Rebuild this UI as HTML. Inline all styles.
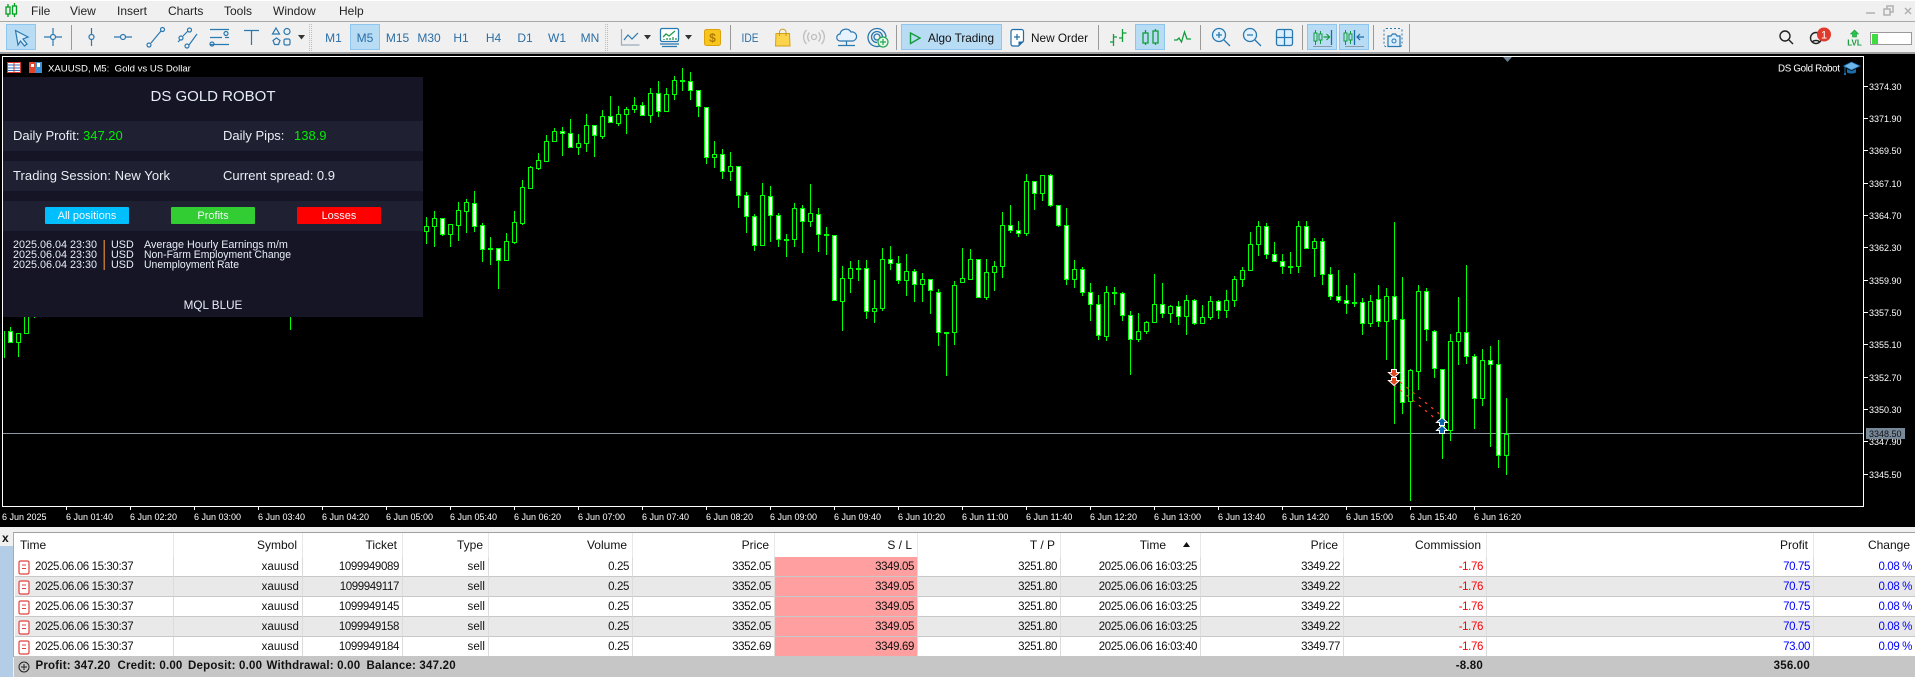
<!DOCTYPE html>
<html lang="en"><head><meta charset="utf-8"><title>XAUUSD M5</title>
<style>
html,body{margin:0;padding:0;background:#f0f0f0}
body{position:relative;width:1915px;height:677px;overflow:hidden;font-family:"Liberation Sans",sans-serif;color:#111}
svg.main{position:absolute;left:0;top:0}
svg text{font-family:"Liberation Sans",sans-serif}
.strip{position:absolute;left:0;top:546px;width:13px;height:131px;background:#b3cde6}
.closex{position:absolute;left:2px;top:531px;font:bold 12px "Liberation Sans",sans-serif;color:#111}
.wrap{position:absolute;left:13px;top:532px;width:1902px;height:125px;background:#fff;border-top:1px solid #a0a0a0;border-left:1px solid #aaa;box-sizing:border-box;overflow:hidden}
table{position:absolute;left:1px;top:0;border-collapse:separate;border-spacing:0;table-layout:fixed;width:1901px}
th,td{text-align:right;padding:0 3px 0 0;white-space:nowrap;overflow:hidden;border-right:1px solid #dcdcdc;box-sizing:border-box}
th{height:24px;font:normal 12px "Liberation Sans",sans-serif;padding-right:5px;border-right-color:#e8e8e8}
td{height:20px;font:11.5px "Liberation Sans",sans-serif;letter-spacing:-.38px;border-bottom:1px solid #c8c8c8}
tr:last-child td{border-bottom:0;height:19px}
tr.alt td{background:#e9e9e9}
td.first,th.first{text-align:left;position:relative}
th.first{padding-left:5px}
td.first{padding-left:20px}
td.first svg{position:absolute;left:3px;top:3px}
td.sym{letter-spacing:.05px}
td.sl{background:#ff9f9f!important}
td.neg{color:#f00}
td.pos{color:#00f}
.foot{position:absolute;left:14px;top:656px;width:1901px;height:21px;background:#c6c6c6}
.foot span{position:absolute;top:3px;font:bold 11.5px/15px "Liberation Sans",sans-serif;letter-spacing:.2px;white-space:nowrap;color:#111}
.foot svg{position:absolute;left:4px;top:5px}
</style></head><body>

<svg class="main" width="1915" height="677" viewBox="0 0 1915 677">
<!-- top chrome -->
<rect width="1915" height="54" fill="#f0f0f0"/>
<rect width="1915" height="1" fill="#fff"/>
<rect y="21" width="1915" height="1" fill="#a8a8a8"/>
<rect y="52" width="1915" height="2" fill="#a0a0a0"/>

<!-- logo -->
<g fill="none" stroke="#00a020" stroke-width="1.3">
<path d="M8 4v13M14.500 3v14"/><rect x="6" y="7" width="4" height="7" fill="#f0f0f0"/><rect x="12.500" y="6" width="4" height="8" fill="#f0f0f0"/>
</g>
<g font-size="12" fill="#222">
<text x="31" y="15">File</text><text x="70" y="15">View</text><text x="117" y="15">Insert</text><text x="168" y="15">Charts</text><text x="224" y="15">Tools</text><text x="273" y="15">Window</text><text x="339" y="15">Help</text>
</g>
<!-- window buttons -->
<g stroke="#b0b0b0" stroke-width="1.5" fill="none">
<path d="M1866 13h9"/><rect x="1884" y="9" width="6" height="6"/><path d="M1887 9V6h6v6h-3"/><path d="M1905 8l6 6M1911 8l-6 6"/>
</g>

<!-- selected boxes -->
<g fill="#b9dcf5" stroke="#8fc6ef">
<rect x="6.500" y="24.500" width="29" height="25"/><rect x="350.500" y="24.500" width="29" height="25"/><rect x="901.500" y="24.500" width="100" height="25"/><rect x="1135.500" y="24.500" width="29" height="25"/><rect x="1307.500" y="24.500" width="29" height="25"/><rect x="1339.500" y="24.500" width="29" height="25"/>
</g>
<!-- separators -->
<g stroke="#9a9a9a">
<path d="M71.500 25v25M730.500 25v25M896.500 25v25M1098.500 25v25M1200.500 25v25M1302.500 25v25M1373.500 25v25M1409.500 24v28"/>
</g>
<g stroke="#bbb" stroke-dasharray="1 1">
<path d="M309.500 24v27M311.500 24v27M605.500 24v27M607.500 24v27"/>
</g>

<!-- drawing tools -->
<g fill="none" stroke="#2a78b0" stroke-width="1.2">
<path d="M15.500 30.500L28 37l-5 2 4 5-2.500 2-4-5-2.500 4z" fill="#d7ecfb"/>
<path d="M44 37h6M56 37h6M53 28v6M53 40v6"/><circle cx="53" cy="37" r="2.500"/>
<path d="M91.500 28v6M91.500 40v6"/><circle cx="91.500" cy="37" r="2.500"/>
<path d="M114 37h6M126 37h6"/><circle cx="123" cy="37" r="2.500"/>
<path d="M151 43l10-12"/><circle cx="149" cy="45" r="2"/><circle cx="162.500" cy="29.500" r="2"/>
<path d="M183 36l5-5M178 42l2-2M189 45l8-11"/><circle cx="181" cy="38" r="2"/><circle cx="189.500" cy="30" r="2"/><circle cx="187" cy="46" r="2"/>
<path d="M210 29.500h19M210 37.500h12M210 44.500h19M229 37.500h0"/><circle cx="226" cy="33.500" r="2"/><circle cx="212" cy="44" r="2"/><path d="M225 37.500h4"/>
<path d="M244 30.500h15M251.500 31v14"/>
<path d="M276 28l3.500 6h-7z"/><circle cx="287" cy="31.500" r="3"/><path d="M276.500 38l3.500 2.500-1.500 4h-4l-1.500-4z"/><rect x="284" y="39" width="6" height="6" rx="1.500"/>
</g>
<path d="M298 35h7l-3.500 4.500z" fill="#333"/>

<!-- timeframes -->
<g font-size="12" fill="#2a6ea6" text-anchor="middle">
<text x="333.500" y="42">M1</text><text x="365" y="42">M5</text><text x="397.500" y="42">M15</text><text x="429" y="42">M30</text><text x="461" y="42">H1</text><text x="493.500" y="42">H4</text><text x="525" y="42">D1</text><text x="557" y="42">W1</text><text x="590" y="42">MN</text>
<text x="750" y="42" textLength="17" lengthAdjust="spacingAndGlyphs">IDE</text>
</g>

<!-- line chart icon -->
<g fill="none" stroke="#2a78b0" stroke-width="1.200">
<path d="M621.500 29v16h18" stroke="#9ab"/><path d="M624 40l4-5 4 4 6-6"/>
</g>
<path d="M644 35h7l-3.500 4.500zM685 35h7l-3.500 4.500z" fill="#333"/>
<!-- monitor -->
<g fill="none" stroke="#2a78b0" stroke-width="1.300">
<rect x="660.500" y="28.500" width="18" height="13" rx="1.500" fill="#fff"/><path d="M660 44h19M662 46.500h15"/>
<path d="M663 37l3-3 3 2 6-5" stroke="#1e9c4a"/><path d="M664 40v-1M667 40v-2M670 40v-2M673 40v-3M676 40v-2" stroke="#1e9c4a"/>
</g>
<!-- dollar -->
<rect x="704.500" y="29.500" width="16" height="16" rx="2" fill="#f8c51c" stroke="#dca20c"/>
<text x="712.500" y="42" font-size="12" font-weight="bold" fill="#b07a06" text-anchor="middle">$</text>
<!-- bag -->
<path d="M776 33.500h13.500l.5 12.500h-14.500z" fill="#fbd44c" stroke="#d4a017"/>
<path d="M779.500 36v-3.500c0-4.500 6.500-4.500 6.500 0V36" fill="none" stroke="#c99a14"/>
<!-- signal -->
<g fill="none" stroke="#bdbdbd" stroke-width="1.300">
<circle cx="814" cy="37" r="2.500"/><path d="M809.500 32.500a6.500 6.500 0 0 0 0 9M818.500 32.500a6.500 6.500 0 0 1 0 9M806.500 30a10 10 0 0 0 0 14M821.500 30a10 10 0 0 1 0 14"/>
</g>
<!-- cloud -->
<g fill="none" stroke="#2a78b0" stroke-width="1.200">
<path d="M842 41h-1.500a3.500 3.500 0 0 1-.5-7 6 6 0 0 1 11-2 4.500 4.500 0 0 1 2 9z" fill="#e6f3fd"/><path d="M846.500 41v4M838 45.500h17"/>
</g>
<!-- vps -->
<g fill="none" stroke="#2a78b0" stroke-width="1.300">
<circle cx="877" cy="37" r="3"/><path d="M880 46a9 9 0 1 1 6-9"/><path d="M877 42.500a5.500 5.500 0 1 1 5.500-5.500"/>
</g>
<circle cx="883" cy="42" r="5" fill="#e9f9ee" stroke="#1ea84e" stroke-width="1.200"/>
<path d="M880 42h6M883 39v6" stroke="#1ea84e" stroke-width="1.200"/>
<!-- algo -->
<path d="M910.500 33l9.500 5-9.500 5.500z" fill="none" stroke="#119c3a" stroke-width="1.400"/>
<text x="928" y="42" font-size="12" fill="#111" textLength="66" lengthAdjust="spacingAndGlyphs">Algo Trading</text>
<!-- new order -->
<path d="M1013 29.500h8.500a2 2 0 0 1 2 2V41l-5 5h-5.500a2 2 0 0 1-2-2V31.500a2 2 0 0 1 2-2z" fill="#fff" stroke="#1b6ca8" stroke-width="1.200"/>
<path d="M1014 37h6M1017 34v6" stroke="#1b6ca8" stroke-width="1.200"/>
<path d="M1019 46v-4h4.500" fill="#1b6ca8" stroke="#1b6ca8"/>
<text x="1031" y="42" font-size="12" fill="#111" textLength="57" lengthAdjust="spacingAndGlyphs">New Order</text>
<!-- bars -->
<g fill="none" stroke="#119c3a" stroke-width="1.300">
<path d="M1113.500 34v12M1110 42h3.500M1113.500 37h3.500M1122.500 29v13M1119 38h3.500M1122.500 33h4"/>
</g>
<!-- candles -->
<g fill="none" stroke="#119c3a" stroke-width="1.300">
<path d="M1145.500 30v15M1155.500 29v16"/><rect x="1143" y="33" width="5" height="10" fill="#b9dcf5"/><rect x="1153" y="31" width="5" height="12" fill="#b9dcf5"/>
</g>
<path d="M1174 40h3l2-2 2.500 4 3-10 2.500 7h4" fill="none" stroke="#119c3a" stroke-width="1.300"/>
<!-- zoom -->
<g fill="none" stroke="#2a78b0" stroke-width="1.300">
<circle cx="1219" cy="35" r="6.500" fill="#e3f2fd"/><path d="M1216 35h6M1219 32v6M1224 40l6 6"/>
<circle cx="1250" cy="35" r="6.500" fill="#e3f2fd"/><path d="M1247 35h6M1255 40l6 6"/>
<rect x="1276.500" y="29.500" width="16" height="16" rx="2" fill="#dcefff"/><path d="M1284.500 29v17M1276 37.500h17"/>
</g>
<!-- autoscroll -->
<g fill="none" stroke="#119c3a">
<path d="M1315.500 30v3M1315.500 41v4M1320.500 31v3M1320.500 40v4"/><rect x="1314" y="33" width="3" height="8"/><rect x="1319" y="34" width="3" height="6"/>
<path d="M1323.500 37h6M1326.500 34l3 3-3 3" stroke-width="1.200"/>
</g>
<path d="M1331.500 30v15" stroke="#1b6ca8" stroke-width="1.300"/><path d="M1313 46.500h19" stroke="#8a9aa8"/>
<g fill="none" stroke="#119c3a">
<path d="M1345.500 30v3M1345.500 41v4M1350.500 31v3M1350.500 40v4"/><rect x="1344" y="33" width="3" height="8"/><rect x="1349" y="34" width="3" height="6"/>
</g>
<path d="M1354.500 30v15" stroke="#1b6ca8" stroke-width="1.300"/><path d="M1364 37h-7M1360 34l-3 3 3 3" fill="none" stroke="#1b6ca8" stroke-width="1.200"/><path d="M1345 46.500h19" stroke="#8a9aa8"/>
<!-- screenshot -->
<rect x="1384" y="28.500" width="18" height="18" rx="2" fill="none" stroke="#2a78b0" stroke-dasharray="2 2"/>
<path d="M1388 36h3l1.500-2h3l1.500 2h3v10.500h-12z" fill="#dcefff" stroke="#2a78b0" stroke-width="1.200"/><circle cx="1394" cy="41" r="2" fill="none" stroke="#2a78b0"/>
<!-- right icons -->
<g fill="none" stroke="#222" stroke-width="1.400">
<circle cx="1785" cy="36" r="5"/><path d="M1789 40l4 4"/>
<circle cx="1816" cy="38" r="5.500"/><path d="M1812 42a6 6 0 0 1 8 0"/>
</g>
<circle cx="1824" cy="34.500" r="7" fill="#e03a2c"/>
<text x="1824" y="38.500" font-size="11" fill="#fff" text-anchor="middle">1</text>
<path d="M1854.500 30l4 4h-2v3h-4v-3h-2z" fill="#2ec04a" stroke="#119c3a" stroke-width=".6"/>
<text x="1854.500" y="45.500" font-size="8" font-weight="bold" fill="#119c3a" text-anchor="middle">LVL</text>
<rect x="1870.500" y="32.500" width="41" height="12" fill="#fff" stroke="#999"/>
<rect x="1872" y="34" width="6" height="10" fill="#3fdb3f"/>

<!-- chart -->
<rect y="54" width="1915" height="473" fill="#000"/>
<path d="M2.500 56.500H1863.500V506.500H2.500z" fill="none" stroke="#fff"/>
<path d="M1503 57h9l-4.500 5z" fill="#6b7d8e"/>
<rect x="3" y="433" width="1860" height="1" fill="#8a97a5"/>

<!-- wicks -->
<path stroke="#0f0" fill="none" d="M4.500 331V358M10.500 327V342M18.500 342V357M34.500 315V318M290.500 300V330M426.500 217V244M434.500 211V247M442.500 218V236M450.500 224V247M458.500 202V241M466.500 199V233M474.500 191V232M482.500 223V262M490.500 237V265M498.500 248V289M506.500 233V260M514.500 211V244M522.500 180V225M530.500 166V189M538.500 153V170M546.500 135V161M554.500 128V141M562.500 127V156M570.500 119V147M578.500 134V155M586.500 114V152M594.500 125V157M602.500 110V139M610.500 96V122M618.500 106V126M626.500 107V134M634.500 97V113M642.500 102V115M650.500 88V123M658.500 81V117M666.500 88V111M674.500 76V100M682.500 68V91M690.500 72V100M698.500 90V117M706.500 107V164M714.500 141V168M722.500 149V179M730.500 152V181M738.500 166V208M746.500 192V233M754.500 214V251M762.500 183V245M770.500 186V242M778.500 213V247M786.500 234V257M794.500 203V247M802.500 205V253M810.500 184V227M818.500 208V252M826.500 227V255M834.500 235V300M842.500 266V331M850.500 261V293M858.500 260V281M866.500 260V319M874.500 280V323M882.500 248V311M890.500 246V270M898.500 256V284M906.500 254V296M914.500 269V302M922.500 273V302M930.500 279V314M938.500 289V346M946.500 332V376M954.500 281V345M962.500 248V282M970.500 249V279M978.500 259V298M986.500 259V300M994.500 261V291M1002.500 212V278M1010.500 205V233M1018.500 221V237M1026.500 174V236M1034.500 181V210M1042.500 175V201M1050.500 174V207M1058.500 205V227M1066.500 208V285M1074.500 260V288M1082.500 267V296M1090.500 283V321M1098.500 295V340M1106.500 286V341M1114.500 287V305M1122.500 292V321M1130.500 311V375M1138.500 313V342M1146.500 321V334M1154.500 274V322M1162.500 283V318M1170.500 305V323M1178.500 301V325M1186.500 295V335M1194.500 299V325M1202.500 305V323M1210.500 296V320M1218.500 300V319M1226.500 290V318M1234.500 276V307M1242.500 267V287M1250.500 232V270M1258.500 221V256M1266.500 223V259M1274.500 242V261M1282.500 254V274M1290.500 252V274M1298.500 221V273M1306.500 221V248M1314.500 238V277M1322.500 238V285M1330.500 267V300M1338.500 270V303M1346.500 285V314M1354.500 273V307M1362.500 298V335M1370.500 295V327M1378.500 285V327M1386.500 288V360M1394.500 222V424M1402.500 277V414M1410.500 369V501M1418.500 285V390M1426.500 288V341M1434.500 330V378M1442.500 369V459M1450.500 334V441M1458.500 297V365M1466.500 265V364M1474.500 354V429M1482.500 349V406M1490.500 346V447M1498.500 340V468M1506.500 398V475"/>
<!-- hollow bodies -->
<path stroke="#0f0" fill="#000" d="M16.500 333.500h4v9h-4zM24.500 300.500h4v33h-4zM424.500 226.500h4v5h-4zM432.500 218.500h4v8h-4zM448.500 224.500h4v10h-4zM456.500 210.500h4v15h-4zM464.500 202.500h4v9h-4zM504.500 241.500h4v19h-4zM512.500 222.500h4v20h-4zM520.500 187.500h4v36h-4zM528.500 167.500h4v21h-4zM536.500 160.500h4v8h-4zM544.500 141.500h4v20h-4zM552.500 131.500h4v10h-4zM576.500 143.500h4v4h-4zM584.500 125.500h4v18h-4zM600.500 116.500h4v20h-4zM616.500 114.500h4v9h-4zM624.500 109.500h4v5h-4zM632.500 105.500h4v4h-4zM648.500 93.500h4v22h-4zM664.500 94.500h4v17h-4zM672.500 80.500h4v14h-4zM712.500 154.500h4v3h-4zM728.500 166.500h4v5h-4zM760.500 195.500h4v50h-4zM792.500 208.500h4v31h-4zM808.500 213.500h4v8h-4zM840.500 278.500h4v23h-4zM848.500 268.500h4v10h-4zM872.500 308.500h4v3h-4zM880.500 259.500h4v49h-4zM904.500 271.500h4v9h-4zM920.500 279.500h4v5h-4zM952.500 285.500h4v47h-4zM960.500 278.500h4v4h-4zM968.500 259.500h4v20h-4zM984.500 272.500h4v25h-4zM992.500 266.500h4v6h-4zM1000.500 225.500h4v41h-4zM1024.500 181.500h4v52h-4zM1040.500 175.500h4v18h-4zM1072.500 269.500h4v10h-4zM1104.500 292.500h4v44h-4zM1136.500 331.500h4v8h-4zM1144.500 322.500h4v9h-4zM1152.500 304.500h4v18h-4zM1168.500 306.500h4v7h-4zM1184.500 300.500h4v16h-4zM1200.500 317.500h4v6h-4zM1208.500 301.500h4v16h-4zM1224.500 300.500h4v10h-4zM1232.500 279.500h4v21h-4zM1240.500 270.500h4v9h-4zM1248.500 244.500h4v26h-4zM1256.500 226.500h4v18h-4zM1296.500 226.500h4v40h-4zM1312.500 241.500h4v7h-4zM1368.500 301.500h4v22h-4zM1384.500 296.500h4v25h-4zM1408.500 370.500h4v31h-4zM1416.500 291.500h4v80h-4zM1448.500 341.500h4v89h-4zM1456.500 332.500h4v9h-4zM1480.500 360.500h4v38h-4zM1504.500 434.500h4v21h-4z"/>
<!-- filled bodies -->
<path stroke="#0f0" fill="#fff" d="M8.500 331.500h4v11h-4zM440.500 218.500h4v16h-4zM472.500 203.500h4v23h-4zM480.500 225.500h4v24h-4zM488.500 248.500h4v1h-4zM496.500 248.500h4v12h-4zM560.500 131.500h4v2h-4zM568.500 133.500h4v14h-4zM592.500 125.500h4v10h-4zM608.500 116.500h4v6h-4zM640.500 105.500h4v10h-4zM656.500 93.500h4v18h-4zM680.500 80.500h4v1h-4zM688.500 81.500h4v9h-4zM696.500 90.500h4v16h-4zM704.500 107.500h4v50h-4zM720.500 154.500h4v17h-4zM736.500 166.500h4v29h-4zM744.500 195.500h4v21h-4zM752.500 216.500h4v29h-4zM768.500 196.500h4v19h-4zM776.500 215.500h4v24h-4zM784.500 239.500h4v1h-4zM800.500 208.500h4v13h-4zM816.500 214.500h4v20h-4zM824.500 234.500h4v1h-4zM832.500 235.500h4v65h-4zM856.500 268.500h4v1h-4zM864.500 268.500h4v43h-4zM888.500 259.500h4v4h-4zM896.500 263.500h4v17h-4zM912.500 271.500h4v13h-4zM928.500 279.500h4v11h-4zM936.500 292.500h4v40h-4zM944.500 332.500h4v1h-4zM976.500 259.500h4v38h-4zM1008.500 225.500h4v5h-4zM1016.500 230.500h4v3h-4zM1032.500 181.500h4v12h-4zM1048.500 175.500h4v30h-4zM1056.500 205.500h4v20h-4zM1064.500 225.500h4v54h-4zM1080.500 269.500h4v23h-4zM1088.500 292.500h4v12h-4zM1096.500 304.500h4v31h-4zM1112.500 292.500h4v1h-4zM1120.500 293.500h4v22h-4zM1128.500 315.500h4v24h-4zM1160.500 304.500h4v9h-4zM1176.500 306.500h4v10h-4zM1192.500 300.500h4v23h-4zM1216.500 301.500h4v9h-4zM1264.500 226.500h4v28h-4zM1272.500 254.500h4v7h-4zM1280.500 261.500h4v5h-4zM1288.500 266.500h4v1h-4zM1304.500 226.500h4v22h-4zM1320.500 241.500h4v33h-4zM1328.500 274.500h4v22h-4zM1336.500 296.500h4v4h-4zM1344.500 300.500h4v3h-4zM1352.500 302.500h4v1h-4zM1360.500 302.500h4v21h-4zM1376.500 299.500h4v22h-4zM1392.500 296.500h4v23h-4zM1400.500 319.500h4v83h-4zM1424.500 291.500h4v38h-4zM1432.500 331.500h4v37h-4zM1440.500 369.500h4v59h-4zM1464.500 332.500h4v24h-4zM1472.500 356.500h4v42h-4zM1488.500 360.500h4v4h-4zM1496.500 364.500h4v91h-4z"/>

<!-- trade lines and arrows -->
<g stroke="#ff4020" stroke-width="1.300" stroke-dasharray="2.500 5.500" fill="none">
<path d="M1394 377L1442 416M1394 385L1442 424"/>
</g>
<g stroke="#fff" stroke-width="1">
<path d="M1391.500 369.500h5v3h3l-5.500 5-5.500-5h3z" fill="#e04820"/>
<path d="M1391.500 377.500h5v3h3l-5.500 5-5.500-5h3z" fill="#e04820"/>
<path d="M1439.500 425.500h5v-3h3l-5.500-5-5.500 5h3z" fill="#0a64ad"/>
<path d="M1439.500 433.500h5v-3h3l-5.500-5-5.500 5h3z" fill="#0a64ad"/>
</g>

<!-- chart title -->
<rect x="7.500" y="62.500" width="13" height="10" fill="#fff" stroke="#d8382c"/>
<path d="M8 65h12M8 68h12M8 70.500h12" stroke="#2b6fc0"/><path d="M14 63v9" stroke="#d8382c"/>
<rect x="29" y="62" width="6" height="11" fill="#e0452e"/><rect x="35" y="62" width="7" height="11" fill="#3a8fd8"/><rect x="31" y="64" width="3" height="3" fill="#fff"/><rect x="37" y="63" width="3" height="4" fill="#fff"/>
<text x="48" y="71.500" font-size="9.600" fill="#fff" xml:space="preserve">XAUUSD, M5:  Gold vs US Dollar</text>
<text x="1778" y="71.500" font-size="9.800" fill="#fff" textLength="62">DS Gold Robot</text>
<path d="M1843.500 66l8-4 8.500 4-8.500 4z" fill="#6db6ea" stroke="#1b6ca8" stroke-width=".7"/>
<path d="M1847 69v3.500c3 1.500 6 1.500 9 0V69l-4.500 2z" fill="#1b6ca8"/><path d="M1845 67v6" stroke="#1b6ca8"/><rect x="1844" y="73" width="2" height="2" fill="#1b6ca8"/>

<!-- price axis -->
<g stroke="#fff">
<path d="M1864 86.500h4M1864 118.500h4M1864 150.500h4M1864 183.500h4M1864 215.500h4M1864 247.500h4M1864 280.500h4M1864 312.500h4M1864 344.500h4M1864 377.500h4M1864 409.500h4M1864 441.500h4M1864 474.500h4"/>
</g>
<g font-size="9" fill="#fff">
<text x="1869" y="90">3374.30</text><text x="1869" y="122">3371.90</text><text x="1869" y="154">3369.50</text><text x="1869" y="187">3367.10</text><text x="1869" y="219">3364.70</text><text x="1869" y="251">3362.30</text><text x="1869" y="284">3359.90</text><text x="1869" y="316">3357.50</text><text x="1869" y="348">3355.10</text><text x="1869" y="381">3352.70</text><text x="1869" y="413">3350.30</text><text x="1869" y="445">3347.90</text><text x="1869" y="478">3345.50</text>
</g>
<rect x="1866" y="428" width="39" height="11" fill="#778899"/>
<text x="1869" y="437" font-size="9" fill="#111">3348.50</text>

<!-- time axis -->
<g stroke="#fff">
<path d="M66.500 507v3M130.500 507v3M194.500 507v3M258.500 507v3M322.500 507v3M386.500 507v3M450.500 507v3M514.500 507v3M578.500 507v3M642.500 507v3M706.500 507v3M770.500 507v3M834.500 507v3M898.500 507v3M962.500 507v3M1026.500 507v3M1090.500 507v3M1154.500 507v3M1218.500 507v3M1282.500 507v3M1346.500 507v3M1410.500 507v3M1474.500 507v3"/>
</g>
<g font-size="9" fill="#fff">
<text x="2" y="520">6 Jun 2025</text><text x="66" y="520">6 Jun 01:40</text><text x="130" y="520">6 Jun 02:20</text><text x="194" y="520">6 Jun 03:00</text><text x="258" y="520">6 Jun 03:40</text><text x="322" y="520">6 Jun 04:20</text><text x="386" y="520">6 Jun 05:00</text><text x="450" y="520">6 Jun 05:40</text><text x="514" y="520">6 Jun 06:20</text><text x="578" y="520">6 Jun 07:00</text><text x="642" y="520">6 Jun 07:40</text><text x="706" y="520">6 Jun 08:20</text><text x="770" y="520">6 Jun 09:00</text><text x="834" y="520">6 Jun 09:40</text><text x="898" y="520">6 Jun 10:20</text><text x="962" y="520">6 Jun 11:00</text><text x="1026" y="520">6 Jun 11:40</text><text x="1090" y="520">6 Jun 12:20</text><text x="1154" y="520">6 Jun 13:00</text><text x="1218" y="520">6 Jun 13:40</text><text x="1282" y="520">6 Jun 14:20</text><text x="1346" y="520">6 Jun 15:00</text><text x="1410" y="520">6 Jun 15:40</text><text x="1474" y="520">6 Jun 16:20</text>
</g>

<!-- robot panel -->
<rect x="3" y="77" width="420" height="240" fill="#151526"/>
<rect x="3" y="121" width="420" height="30" fill="#1f2133"/>
<rect x="3" y="161" width="420" height="30" fill="#1f2133"/>
<rect x="3" y="201" width="420" height="30" fill="#1f2133"/>
<text x="213" y="101" font-size="15" fill="#e8eef5" text-anchor="middle">DS GOLD ROBOT</text>
<g font-size="13" fill="#e8eef5">
<text x="13" y="140">Daily Profit:</text><text x="83" y="140" fill="#0e0">347.20</text>
<text x="223" y="140">Daily Pips:</text><text x="294" y="140" fill="#0e0">138.9</text>
<text x="13" y="180" textLength="157">Trading Session: New York</text>
<text x="223" y="180">Current spread: 0.9</text>
</g>
<rect x="45" y="207" width="84" height="17" rx="1" fill="#00bfff"/>
<rect x="171" y="207" width="84" height="17" rx="1" fill="#32cd32"/>
<rect x="297" y="207" width="84" height="17" rx="1" fill="#f00"/>
<g font-size="11" fill="#f4f8fb" text-anchor="middle">
<text x="87" y="219">All positions</text><text x="213" y="219">Profits</text><text x="339" y="219">Losses</text>
</g>
<rect x="103.500" y="240" width="1.500" height="30" fill="#b87333"/>
<g font-size="10.800" fill="#e8eef5">
<text x="13" y="248">2025.06.04 23:30</text><text x="111" y="248">USD</text><text x="144" y="248">Average Hourly Earnings m/m</text>
<text x="13" y="258">2025.06.04 23:30</text><text x="111" y="258">USD</text><text x="144" y="258" textLength="147" lengthAdjust="spacingAndGlyphs">Non-Farm Employment Change</text>
<text x="13" y="268">2025.06.04 23:30</text><text x="111" y="268">USD</text><text x="144" y="268" textLength="95" lengthAdjust="spacingAndGlyphs">Unemployment Rate</text>
</g>
<text x="213" y="309" font-size="11.700" fill="#e8eef5" text-anchor="middle">MQL BLUE</text>
</svg>

<!-- bottom panel -->
<div class="strip"></div>
<div class="closex">x</div>
<div class="wrap">
<table>
<colgroup><col style="width:159px"><col style="width:129px"><col style="width:100px"><col style="width:86px"><col style="width:144px"><col style="width:142px"><col style="width:143px"><col style="width:143px"><col style="width:140px"><col style="width:143px"><col style="width:143px"><col style="width:327px"><col style="width:102px"></colgroup>
<tr><th class="first">Time</th><th>Symbol</th><th>Ticket</th><th>Type</th><th>Volume</th><th>Price</th><th>S / L</th><th>T / P</th><th style="padding-right:34px;position:relative">Time<svg width="7" height="5" style="position:absolute;right:10px;top:9px"><path d="M0 5L3.500 0 7 5z" fill="#111"/></svg></th><th>Price</th><th>Commission</th><th>Profit</th><th>Change</th></tr>
<tr><td class="first"><svg width="12" height="15"><rect x="1" y="1" width="10" height="13" rx="1.500" fill="#fff" stroke="#e04040" stroke-width="1.200"/><path d="M4 5h4M4 8.500h4" stroke="#e04040"/></svg>2025.06.06 15:30:37</td><td class="sym">xauusd</td><td>1099949089</td><td class="sym">sell</td><td>0.25</td><td>3352.05</td><td class="sl">3349.05</td><td>3251.80</td><td>2025.06.06 16:03:25</td><td>3349.22</td><td class="neg">-1.76</td><td class="pos">70.75</td><td class="pos">0.08 %</td></tr>
<tr class="alt"><td class="first"><svg width="12" height="15"><rect x="1" y="1" width="10" height="13" rx="1.500" fill="#fff" stroke="#e04040" stroke-width="1.200"/><path d="M4 5h4M4 8.500h4" stroke="#e04040"/></svg>2025.06.06 15:30:37</td><td class="sym">xauusd</td><td>1099949117</td><td class="sym">sell</td><td>0.25</td><td>3352.05</td><td class="sl">3349.05</td><td>3251.80</td><td>2025.06.06 16:03:25</td><td>3349.22</td><td class="neg">-1.76</td><td class="pos">70.75</td><td class="pos">0.08 %</td></tr>
<tr><td class="first"><svg width="12" height="15"><rect x="1" y="1" width="10" height="13" rx="1.500" fill="#fff" stroke="#e04040" stroke-width="1.200"/><path d="M4 5h4M4 8.500h4" stroke="#e04040"/></svg>2025.06.06 15:30:37</td><td class="sym">xauusd</td><td>1099949145</td><td class="sym">sell</td><td>0.25</td><td>3352.05</td><td class="sl">3349.05</td><td>3251.80</td><td>2025.06.06 16:03:25</td><td>3349.22</td><td class="neg">-1.76</td><td class="pos">70.75</td><td class="pos">0.08 %</td></tr>
<tr class="alt"><td class="first"><svg width="12" height="15"><rect x="1" y="1" width="10" height="13" rx="1.500" fill="#fff" stroke="#e04040" stroke-width="1.200"/><path d="M4 5h4M4 8.500h4" stroke="#e04040"/></svg>2025.06.06 15:30:37</td><td class="sym">xauusd</td><td>1099949158</td><td class="sym">sell</td><td>0.25</td><td>3352.05</td><td class="sl">3349.05</td><td>3251.80</td><td>2025.06.06 16:03:25</td><td>3349.22</td><td class="neg">-1.76</td><td class="pos">70.75</td><td class="pos">0.08 %</td></tr>
<tr><td class="first"><svg width="12" height="15"><rect x="1" y="1" width="10" height="13" rx="1.500" fill="#fff" stroke="#e04040" stroke-width="1.200"/><path d="M4 5h4M4 8.500h4" stroke="#e04040"/></svg>2025.06.06 15:30:37</td><td class="sym">xauusd</td><td>1099949184</td><td class="sym">sell</td><td>0.25</td><td>3352.69</td><td class="sl">3349.69</td><td>3251.80</td><td>2025.06.06 16:03:40</td><td>3349.77</td><td class="neg">-1.76</td><td class="pos">73.00</td><td class="pos">0.09 %</td></tr>
</table>
</div>
<div class="foot">
<svg width="12" height="12"><circle cx="6" cy="6" r="5" fill="none" stroke="#222"/><path d="M3 6h6M6 3v6" stroke="#222"/></svg>
<span style="left:21.500px">Profit: 347.20</span>
<span style="left:103.500px">Credit: 0.00</span>
<span style="left:174px">Deposit: 0.00</span>
<span style="left:252.500px">Withdrawal: 0.00</span>
<span style="left:352.500px">Balance: 347.20</span>
<span style="right:432px">-8.80</span>
<span style="right:105px">356.00</span>
</div>
</body></html>
